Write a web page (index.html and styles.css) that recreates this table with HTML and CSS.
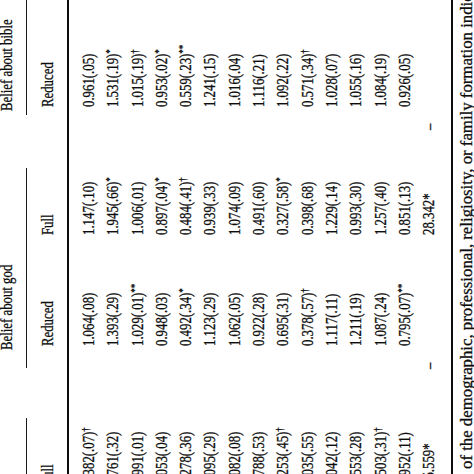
FILE: index.html
```html
<!DOCTYPE html>
<html lang="en">
<head>
<meta charset="utf-8">
<title>Rotated table</title>
<link rel="stylesheet" href="styles.css">
</head>
<body>
<div class="page">
  <div class="tbl">
    <div class="grid spanners">
      <div></div>
      <div class="sp">Belief about god</div>
      <div></div>
      <div class="sp">Belief about bible</div>
    </div>
    <div class="rules">
      <span class="rule r3"></span>
      <span class="rule r2"></span>
      <span class="rule r1"></span>
    </div>
    <div class="grid heads">
      <div>Full</div><div>Reduced</div><div>Full</div><div>Reduced</div>
    </div>
    <div class="grid body">
      <div>0.382(.07)<sup>†</sup></div><div>1.064(.08)</div><div>1.147(.10)</div><div>0.961(.05)</div>
      <div>0.761(.32)</div><div>1.393(.29)</div><div>1.945(.66)<sup>*</sup></div><div>1.531(.19)<sup>*</sup></div>
      <div>0.991(.01)</div><div>1.029(.01)<sup>**</sup></div><div>1.006(.01)</div><div>1.015(.19)<sup>†</sup></div>
      <div>1.053(.04)</div><div>0.948(.03)</div><div>0.897(.04)<sup>*</sup></div><div>0.953(.02)<sup>*</sup></div>
      <div>0.278(.36)</div><div>0.492(.34)<sup>*</sup></div><div>0.484(.41)<sup>†</sup></div><div>0.559(.23)<sup>**</sup></div>
      <div>1.095(.29)</div><div>1.123(.29)</div><div>0.939(.33)</div><div>1.241(.15)</div>
      <div>1.082(.08)</div><div>1.062(.05)</div><div>1.074(.09)</div><div>1.016(.04)</div>
      <div>0.788(.53)</div><div>0.922(.28)</div><div>0.491(.60)</div><div>1.116(.21)</div>
      <div>0.253(.45)<sup>†</sup></div><div>0.695(.31)</div><div>0.327(.58)<sup>*</sup></div><div>1.092(.22)</div>
      <div>1.035(.55)</div><div>0.378(.57)<sup>†</sup></div><div>0.398(.68)</div><div>0.571(.34)<sup>†</sup></div>
      <div>1.042(.12)</div><div>1.117(.11)</div><div>1.229(.14)</div><div>1.028(.07)</div>
      <div>1.553(.28)</div><div>1.211(.19)</div><div>0.993(.30)</div><div>1.055(.16)</div>
      <div>0.503(.31)<sup>†</sup></div><div>1.087(.24)</div><div>1.257(.40)</div><div>1.084(.19)</div>
      <div>0.952(.11)</div><div>0.795(.07)<sup>**</sup></div><div>0.851(.13)</div><div>0.926(.05)</div>
      <div>25.559*</div><div class="dash">–</div><div>28.342*</div><div class="dash">–</div>
    </div>
  </div>
  <p class="caption">of the demographic, professional, religiosity, or family formation indicators</p>
</div>
</body>
</html>
```

FILE: styles.css
```css
html, body {
  margin: 0;
  padding: 0;
  overflow: hidden;
  background: #ffffff;
}

.page {
  width: 474px;
  height: 474px;
  transform: rotate(-90deg);
  overflow: hidden;
  font-family: "Liberation Serif", "Times New Roman", serif;
  font-size: 16px;
  color: #0d0d0d;
  -webkit-text-stroke: 0.3px #0d0d0d;
  background: #ffffff;
}

.tbl {
  margin-left: -11px;
  width: 508px;
}

.grid {
  display: grid;
  grid-template-columns: 139px 111px 128px 130px;
  white-space: nowrap;
}

/* the scanned table is squeezed along the reading direction */
.grid > div {
  transform: scaleX(0.8);
  transform-origin: 0 50%;
}

.spanners {
  height: 14px;
  line-height: 14px;
}

.spanners .sp {
  margin-left: -4px;
}

.rules {
  display: flex;
  height: 1px;
  margin-top: 12px;
}

.rule {
  display: block;
  height: 1px;
  background: #1a1a1a;
}

.r3 { width: 67px; }
.r2 { width: 200px; margin-left: 50px; }
.r1 { flex: 1; margin-left: 53px; }

.heads {
  line-height: 16px;
  padding: 12.5px 0 11.5px;
  border-bottom: 2px solid #0d0d0d;
}

.body {
  line-height: 24.3px;
  padding: 8px 0 9.5px;
  border-bottom: 2px solid #0d0d0d;
}

.body sup {
  font-size: 11px;
  line-height: 0;
  vertical-align: 5px;
}

.dash {
  margin-left: -23px;
}

.caption {
  margin: 4.4px 0 0 5px;
  font-size: 16.8px;
  line-height: 20px;
  white-space: nowrap;
}
```
